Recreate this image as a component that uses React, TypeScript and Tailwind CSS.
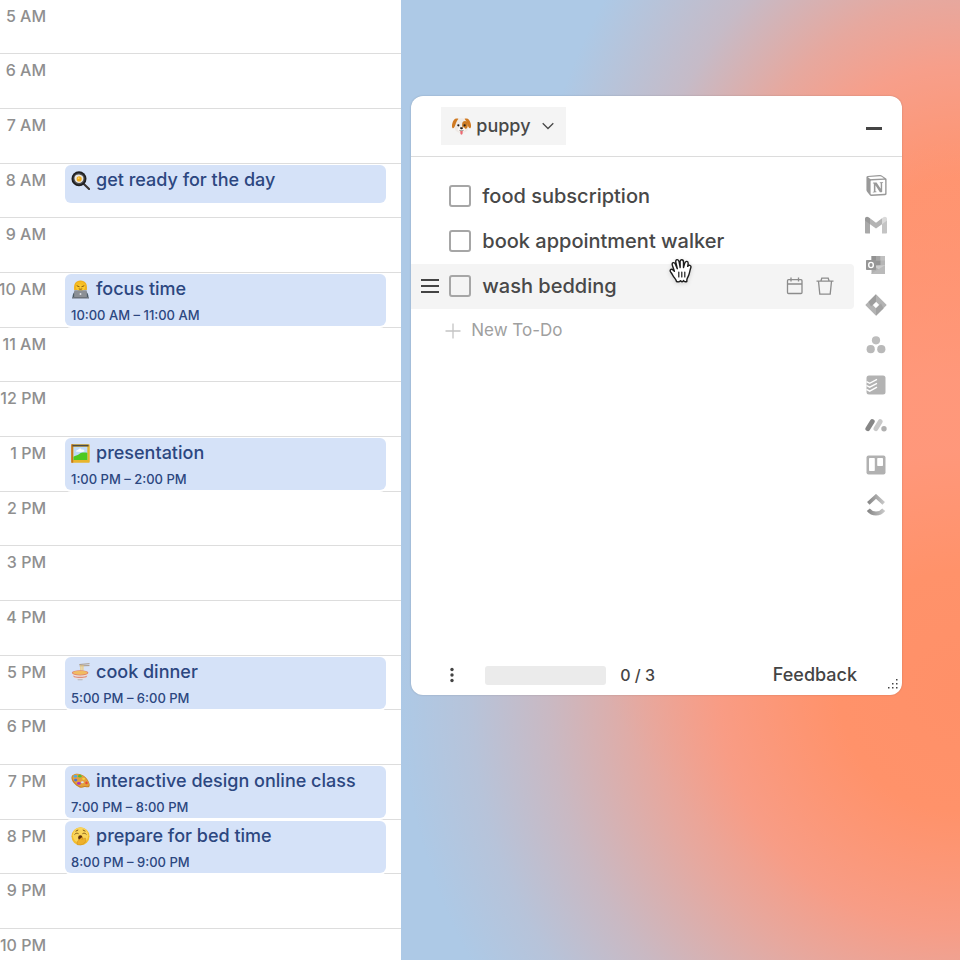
import React from 'react';
import { SiNotion } from 'react-icons/si';

interface CalendarEvent {
  title: string;
  time?: string;
  icon: React.ReactNode;
}

interface HourSlot {
  label: string;
  event?: CalendarEvent;
}

interface Todo {
  id: string;
  title: string;
  active?: boolean;
}

const EMOJI = 'h-[19px] w-[19px] shrink-0';

const FryingPan = () => (
  <svg viewBox="0 0 20 20" className={EMOJI} aria-hidden="true">
    <path d="M13 13.2 19 19" stroke="#3a3432" strokeWidth="2.2" strokeLinecap="round" />
    <circle cx="8.4" cy="8.2" r="7.9" fill="#1f1f21" />
    <circle cx="8.4" cy="8.2" r="6" fill="#4b4c50" />
    <path d="M3.800 6.400c.6-2.200 2.800-2.900 4.800-2.600 2.400.2 4.700 1.900 4.500 4.400-.1 2.400-2.200 4.500-4.700 4.500-2.600.1-5.400-3-4.600-6.300Z" fill="#e9e6e2" />
    <circle cx="8.600" cy="8.300" r="2.700" fill="#f0ac1c" />
    <circle cx="8" cy="7.500" r=".9" fill="#fbd766" />
  </svg>
);

const Technologist = () => (
  <svg viewBox="0 0 20 20" className={EMOJI} aria-hidden="true">
    <path d="M3.300 10.500C2.600 4.200 4.800.7 10 .6c5.200.1 7.400 3.600 6.700 9.900Z" fill="#efb11f" />
    <circle cx="10" cy="7" r="4.900" fill="#fcc92e" />
    <path d="M4.800 6C5.200 3 7.600 2 10 2.100c3 0 4.900 1.300 5.200 3.900-2.700-.1-4.500-.7-5.600-1.900C8.700 5.300 6.900 6 4.800 6Z" fill="#f7bd22" />
    <path d="M6.400 6.200 8.600 7M11.400 7l2.200-.8M8.600 9.400c.9.500 1.900.5 2.800 0" stroke="#70450d" strokeWidth=".9" fill="none" strokeLinecap="round" />
    <path d="M1.500 18.500c.2-3.700 1.300-5.700 3-6.500h11c1.700.8 2.800 2.800 3 6.500Z" fill="#4b5a66" />
    <rect x="3.300" y="10.800" width="13.400" height="8" rx=".8" fill="#8b8f95" />
    <path d="M1 18.300h18v1.100H1Z" fill="#585c62" />
    <circle cx="10" cy="14.700" r="1" fill="#e1e3e6" />
  </svg>
);

const FramedPicture = () => (
  <svg viewBox="0 0 20 20" className={EMOJI} aria-hidden="true">
    <rect x=".3" y=".3" width="19.400" height="19.400" rx=".8" fill="#e8b52c" />
    <path d="M.3.300h2v19.400h-2Z" fill="#c4771f" />
    <path d="M1.500.8h17v1.800h-17Z" fill="#4b4a45" />
    <rect x="2.600" y="3" width="14.600" height="13.800" fill="#bdd9f7" />
    <path d="M5 8c1-2 2.400-1.500 3-2.500 1.300-1.200 3-.5 3.300.5 1.500-.3 2.700.2 2.900 1.500-2.600 1.300-6 1-9.200.5Z" fill="#f7fafd" />
    <path d="M2.600 13.500c2-1.700 4-1.200 5.800-2.700 2.600-2 5.400-1.900 8.800-1.500v7.500H2.600Z" fill="#4ec91f" />
  </svg>
);

const NoodleBowl = () => (
  <svg viewBox="0 0 20 20" className={EMOJI} aria-hidden="true">
    <path d="M8.800 1.600 19.500.7M9 3l10.400-.3" stroke="#9b8266" strokeWidth=".8" />
    <path d="M10.200 2.300v6M11.600 2.300v6M12.700 2.300V8" stroke="#f4c765" strokeWidth=".8" />
    <path d="M1 10.400c.2 4 3.200 6.300 6 7h5.200c2.800-.7 5.800-3 6-7Z" fill="#e9e1df" />
    <path d="M2.200 13.200c2 1.700 12.800 1.700 14.900 0-.2.700-.6 1.300-1 1.800-3 1-9.900 1-12.800 0-.5-.5-.9-1.100-1.100-1.800Z" fill="#e08d7c" />
    <ellipse cx="9.600" cy="10.300" rx="8.700" ry="2.800" fill="#e0806c" />
    <ellipse cx="9.600" cy="10.200" rx="7.600" ry="2.100" fill="#f0bc62" />
    <path d="M6.800 17h5.600l-.4 1.200H7.200Z" fill="#b8b2b4" />
  </svg>
);

const Palette = () => (
  <svg viewBox="0 0 20 20" className={EMOJI} aria-hidden="true">
    <path d="M1.500 3.500C4.800.6 11.500 1.600 15.300 5.500c3.700 3.600 5.300 8.300 3.900 10-1.200 1.400-3.500-.2-5.100.4-1.600.5-2.900 1.300-5.200.3C3.600 14.200-1.900 7 1.500 3.500Z" fill="#c98225" />
    <path d="M2.400 3.300c3.200-2.300 8.900-1 12.400 2.600 3.200 3.200 4.700 7 3.800 8.500-1.100 1.300-3.100-.2-4.700.4-1.700.5-2.900 1.100-4.900.2C4.200 13-.4 6.300 2.400 3.300Z" fill="#e3a13e" />
    <ellipse cx="4.600" cy="4.600" rx="1.900" ry="1.500" fill="#49a9e8" />
    <ellipse cx="9.300" cy="4.400" rx="1.900" ry="1.400" fill="#56be35" />
    <ellipse cx="4.900" cy="8.500" rx="1.700" ry="1.400" fill="#4f72d8" />
    <ellipse cx="8.300" cy="12" rx="2" ry="1.500" fill="#a632c9" />
    <ellipse cx="13.300" cy="7.200" rx="1.600" ry="1.200" fill="#f4d43c" />
    <ellipse cx="16.300" cy="11.500" rx="1.300" ry="1.500" fill="#e8453c" />
    <ellipse cx="12" cy="10.800" rx="1.500" ry="1.100" fill="#d7e3f7" />
  </svg>
);

const YawningFace = () => (
  <svg viewBox="0 0 20 20" className={EMOJI} aria-hidden="true">
    <circle cx="10" cy="9.800" r="9.500" fill="#f3bd2e" />
    <circle cx="10" cy="8.800" r="8.200" fill="#fad55a" />
    <path d="M4 7.600c1.100-1.200 2.300-1.400 3.600-.7M12.400 6.900c1.300-.7 2.500-.5 3.600.7M5.200 4.300l2-1M14.800 4.300l-2-1" stroke="#6b430d" strokeWidth=".9" fill="none" strokeLinecap="round" />
    <ellipse cx="9.800" cy="11.300" rx="2.300" ry="2.500" fill="#5d2e0b" />
    <path d="M7 18.800c-1.100-2.600-.4-4.200 1.300-5.400l3.300-2.500c.8-.5 1.400.3.800 1l-1 1.200 3-1.300c1-.4 1.400.6.700 1.100.8.100.9.900.2 1.300.6.300.5 1-.1 1.300-.9 2.200-3.900 3.900-8.200 3.300Z" fill="#eeb02a" stroke="#b97a14" strokeWidth=".4" />
  </svg>
);

const DogFace = () => (
  <svg viewBox="0 0 20 20" className={EMOJI} aria-hidden="true">
    <path d="M3.600 5C5 2 7.300 1.200 10 1.200S15 2 16.400 5c1.300 2.900 1.300 6.500.2 8.700-1.300 2-3.700 3.100-6.600 3.100s-5.300-1.100-6.600-3.100C2.300 11.500 2.300 7.900 3.600 5Z" fill="#efeae6" />
    <ellipse cx="13.600" cy="8.300" rx="3" ry="4.100" fill="#cd7c24" />
    <path d="M6.800 1.900C3.200.6 1.200 3 .4 6.700-.4 9.600-.1 12 1.300 11.800c2.200-.5 2.100-5.900 5.500-9.900Z" fill="#d07a22" />
    <path d="M13.200 1.900c3.600-1.300 5.600 1.100 6.400 4.800.8 2.900.5 5.300-.9 5.100-2.200-.5-2.100-5.900-5.500-9.900Z" fill="#d07a22" />
    <circle cx="6.700" cy="8.700" r="1.200" fill="#231c19" />
    <circle cx="13.300" cy="8.700" r="1.200" fill="#231c19" />
    <ellipse cx="10" cy="13" rx="3.800" ry="2.600" fill="#fbf8f6" />
    <path d="M8.500 11.200c.7-.5 2.300-.5 3 0 .2 1-.7 1.600-1.500 1.600s-1.700-.6-1.500-1.600Z" fill="#231c19" />
    <path d="M7.900 14.100c1.200.6 3 .6 4.200 0" stroke="#4a3b34" strokeWidth=".7" fill="none" />
    <path d="M8.800 14.700h2.400v2.500c0 1.900-2.400 1.900-2.400 0Z" fill="#ec6a72" />
  </svg>
);

const HOURS: HourSlot[] = [
  { label: '5 AM' },
  { label: '6 AM' },
  { label: '7 AM' },
  { label: '8 AM', event: { title: 'get ready for the day', icon: <FryingPan /> } },
  { label: '9 AM' },
  { label: '10 AM', event: { title: 'focus time', time: '10:00 AM – 11:00 AM', icon: <Technologist /> } },
  { label: '11 AM' },
  { label: '12 PM' },
  { label: '1 PM', event: { title: 'presentation', time: '1:00 PM – 2:00 PM', icon: <FramedPicture /> } },
  { label: '2 PM' },
  { label: '3 PM' },
  { label: '4 PM' },
  { label: '5 PM', event: { title: 'cook dinner', time: '5:00 PM – 6:00 PM', icon: <NoodleBowl /> } },
  { label: '6 PM' },
  { label: '7 PM', event: { title: 'interactive design online class', time: '7:00 PM – 8:00 PM', icon: <Palette /> } },
  { label: '8 PM', event: { title: 'prepare for bed time', time: '8:00 PM – 9:00 PM', icon: <YawningFace /> } },
  { label: '9 PM' },
  { label: '10 PM' }
];

const TODOS: Todo[] = [
  { id: 'food', title: 'food subscription' },
  { id: 'walker', title: 'book appointment walker' },
  { id: 'bedding', title: 'wash bedding', active: true }
];

const LOGO = 'h-[22px] w-[22px]';

const INTEGRATIONS: { name: string; icon: React.ReactNode }[] = [
  { name: 'Notion', icon: <SiNotion className="h-[21px] w-[21px] text-[#999999]" /> },
  {
    name: 'Gmail',
    icon: (
      <svg viewBox="0 0 22 22" className={LOGO} aria-hidden="true">
        <path d="M0 5v13.500c0 .6.400 1 1 1h4V9.300Z" fill="#a9a9a9" />
        <path d="M22 5v13.500c0 .6-.4 1-1 1h-4V9.300Z" fill="#c4c4c4" />
        <path d="M5 4.200v6l6 4.400 6-4.400v-6l-6 4.500Z" fill="#b4b4b4" />
        <path d="M0 4.800C0 2.900 2 2 3.600 3.200L5 4.200v6L0 6.500Z" fill="#989898" />
        <path d="M22 4.800c0-1.900-2-2.800-3.600-1.600L17 4.200v6l5-3.700Z" fill="#dadada" />
      </svg>
    )
  },
  {
    name: 'Outlook',
    icon: (
      <svg viewBox="0 0 22 22" className={LOGO} aria-hidden="true">
        <path d="M6.500 2h13.500v9H6.500Z" fill="#b5b5b5" />
        <path d="M6.500 2H11v4.500H6.500Z" fill="#929292" />
        <path d="M11 2h4.500v4.500H11Z" fill="#a5a5a5" />
        <path d="M15.500 2H20v4.500h-4.500Z" fill="#c0c0c0" />
        <path d="M11 6.500h4.500V11H11Z" fill="#949494" />
        <path d="M6.500 11h13.500v9H6.500Z" fill="#b0b0b0" />
        <path d="M20 11v9L9 12Z" fill="#cccccc" />
        <path d="M6.500 19.500 20 11.200V20H6.500Z" fill="#bababa" />
        <rect x="1" y="6" width="10" height="10" rx=".8" fill="#969696" />
        <ellipse cx="6" cy="11" rx="2.300" ry="2.600" fill="none" stroke="#ffffff" strokeWidth="1.400" />
      </svg>
    )
  },
  {
    name: 'Jira',
    icon: (
      <svg viewBox="0 0 22 22" className={LOGO} aria-hidden="true">
        <path d="M11 .3 21.300 10.500a.7.7 0 0 1 0 1L11 21.700.7 11.500a.7.7 0 0 1 0-1Zm0 7.500L7.800 11l3.200 3.200 3.200-3.200Z" fill="#b3b3b3" fillRule="evenodd" />
        <path d="M11 .3v7.500L6 12.600 3.500 7.700Z" fill="#9d9d9d" />
        <path d="M11 21.700v-7.500l5-4.800 2.500 5Z" fill="#a2a2a2" />
      </svg>
    )
  },
  {
    name: 'Asana',
    icon: (
      <svg viewBox="0 0 22 22" className={LOGO} aria-hidden="true">
        <circle cx="11" cy="6.300" r="4.100" fill="#bdbdbd" />
        <circle cx="5.700" cy="15.200" r="4.100" fill="#b9b9b9" />
        <circle cx="16.300" cy="15.200" r="4.100" fill="#b9b9b9" />
      </svg>
    )
  },
  {
    name: 'Todoist',
    icon: (
      <svg viewBox="0 0 22 22" className={LOGO} aria-hidden="true">
        <rect x="1.500" y="1.500" width="19" height="19" rx="2.500" fill="#b3b3b3" />
        <path d="m1.500 7.600 3.200 1.700 7.300-3.900M1.500 11.500l3.200 1.700L12 9.300M1.500 15.400l3.200 1.700 7.300-3.900" stroke="#ffffff" strokeWidth="1.400" fill="none" />
      </svg>
    )
  },
  {
    name: 'monday.com',
    icon: (
      <svg viewBox="0 0 22 22" className={LOGO} aria-hidden="true">
        <path d="M2.800 14.800 7.300 7.500" stroke="#868686" strokeWidth="4.800" strokeLinecap="round" />
        <path d="m10.800 14.800 4.500-7.300" stroke="#c9c9c9" strokeWidth="4.800" strokeLinecap="round" />
        <circle cx="19" cy="14.700" r="2.700" fill="#b0b0b0" />
      </svg>
    )
  },
  {
    name: 'Trello',
    icon: (
      <svg viewBox="0 0 22 22" className={LOGO} aria-hidden="true">
        <rect x="1.500" y="1.500" width="19" height="19" rx="2" fill="#b1b1b1" />
        <rect x="4" y="4" width="5.800" height="13" rx=".8" fill="#ffffff" />
        <rect x="12.200" y="4" width="5.800" height="8" rx=".8" fill="#ffffff" />
      </svg>
    )
  },
  {
    name: 'ClickUp',
    icon: (
      <svg viewBox="0 0 22 22" className={LOGO} aria-hidden="true">
        <defs>
          <linearGradient id="clickup" x1="0" x2="1">
            <stop stopColor="#878787" />
            <stop offset="1" stopColor="#c6c6c6" />
          </linearGradient>
        </defs>
        <path d="M3.300 9.300 11 2.400l7.700 6.900" stroke="url(#clickup)" strokeWidth="3.700" fill="none" />
        <path d="M3.300 15.700c4.200 5.100 11.200 5.100 15.400 0" stroke="url(#clickup)" strokeWidth="3.900" fill="none" />
      </svg>
    )
  }
];

const HourRow: React.FC<HourSlot> = ({ label, event }) => (
  <li className="flex border-b border-[#dddddd]">
    <span className="flex w-[46px] shrink-0 justify-end whitespace-nowrap text-base leading-8 font-medium text-[#8f8f8f]">
      {label}
    </span>
    {event && (
      <div
        className={`mt-px mr-[15px] ml-[19px] min-w-0 flex-1 rounded-md bg-[#d5e2f8] px-1.5 pt-px font-medium text-[#2c4780] shadow-[0_1px_0_1px_#ffffff] ${
          event.time ? 'h-[52px]' : 'h-[38px]'
        }`}
      >
        <div className="flex items-center gap-[6px] text-lg leading-7 whitespace-nowrap">
          {event.icon}
          <span>{event.title}</span>
        </div>
        {event.time && <div className="text-[13px] leading-6">{event.time}</div>}
      </div>
    )}
  </li>
);

const TodoRow: React.FC<Todo> = ({ id, title, active }) => (
  <li className={`flex h-[45px] items-center pr-5 pb-0.5 pl-2.5 ${active ? 'rounded-r-sm bg-[#f4f4f4]' : ''}`}>
    <span className="w-7 shrink-0">
      {active && (
        <button type="button" aria-label="Reorder" className="block">
          <svg viewBox="0 0 18 14" className="h-[14px] w-[18px]" aria-hidden="true">
            <path d="M0 1h18M0 7h18M0 13h18" stroke="#444444" strokeWidth="2" />
          </svg>
        </button>
      )}
    </span>
    <input
      id={id}
      type="checkbox"
      className="h-[22px] w-[22px] shrink-0 appearance-none rounded-[3px] border-2 border-[#a6a6a6] bg-transparent"
    />
    <label htmlFor={id} className="ml-[11px] flex-1 text-xl font-medium whitespace-nowrap text-[#484848]">
      {title}
    </label>
    {active && (
      <div className="flex gap-3">
        <button type="button" aria-label="Schedule">
          <svg viewBox="0 0 18 18" className="h-[18px] w-[18px]" fill="none" stroke="#8c8c8c" strokeWidth="1.300" aria-hidden="true">
            <rect x="1.500" y="2.700" width="14.500" height="13.800" rx="1" />
            <path d="M1.500 7h14.500M5 .5v4M12.500.5v4" />
          </svg>
        </button>
        <button type="button" aria-label="Delete">
          <svg viewBox="0 0 18 18" className="h-[18px] w-[18px]" fill="none" stroke="#8c8c8c" strokeWidth="1.300" aria-hidden="true">
            <path d="M.5 4.200h17M4.800 4.200l1-3h6.400l1 3M2.500 4.200l1.300 12.900h10.400l1.300-12.900" />
          </svg>
        </button>
      </div>
    )}
  </li>
);

const HandCursor = () => (
  <svg viewBox="0 0 24 26" className="absolute top-[162px] left-[258px] h-[26px] w-[24px] drop-shadow-sm" aria-hidden="true">
    <path
      d="M7.500 23.500c-.5-2-2-3.400-3-5-.9-1.500-1.500-2.800-2.700-4.300-.9-1.200-.8-2.300.1-2.800 1.100-.5 2.300.4 3.500 1.900L3.600 8c-.7-1.800-.5-2.900.5-3.300 1-.4 1.900.4 2.500 2l1.700 4-1.400-6.100c-.4-1.600 0-2.600 1-2.900 1.100-.2 1.900.6 2.200 2.200l1.100 5.600-.1-5.300c0-1.600.6-2.500 1.700-2.500s1.700.9 1.700 2.500v5.400l1.200-4.200c.4-1.500 1.200-2.200 2.200-2 1 .2 1.400 1.200 1.200 2.600l-.4 2.400c.7-1 1.700-1.400 2.500-.9.900.5.900 1.500.5 2.600-.8 2.300-1.100 4.600-1.900 6.900-.6 1.800-1.700 3.100-1.900 4.600l-.1 1.900c-1.300.5-2.600.4-3.200-1-.7 1.500-2.400 1.700-3 .1-.5 1.300-2.500 1.600-4.100.9Z"
      fill="#ffffff"
      stroke="#1c1c1c"
      strokeWidth="1.400"
      strokeLinejoin="round"
    />
    <path d="M9.800 14v5M12.800 14v5M15.800 14v5" stroke="#1c1c1c" strokeWidth="1.200" strokeLinecap="round" />
  </svg>
);

const TodoPanel = () => (
  <section className="relative rounded-xl bg-white shadow-[0_0_2px_rgba(0,0,0,0.2)]">
    <header className="flex h-[61px] items-center justify-between border-b border-[#dcdcdc] pr-5 pl-[30px]">
      <div className="relative flex h-[38px] items-center gap-[5px] bg-[#f4f4f4] pl-[11px]">
        <DogFace />
        <select
          aria-label="List"
          className="h-full w-[90px] appearance-none bg-transparent text-lg font-medium text-[#484848] outline-none"
        >
          <option>puppy</option>
        </select>
        <svg viewBox="0 0 12 8" className="pointer-events-none absolute right-3 h-2 w-3" aria-hidden="true">
          <path d="m.7 1.200 5.300 5.300 5.300-5.300" stroke="#484848" strokeWidth="1.300" fill="none" />
        </svg>
      </div>
      <button type="button" aria-label="Minimize" className="flex h-6 w-4 items-center">
        <span className="mt-1 h-[3px] w-full bg-[#444444]" />
      </button>
    </header>

    <div className="flex">
      <div className="min-h-[498px] flex-1 pt-[17px]">
        <ul>
          {TODOS.map((todo) => (
            <TodoRow key={todo.id} {...todo} />
          ))}
        </ul>
        <div className="flex h-11 items-center gap-2.5 pl-[34px]">
          <svg viewBox="0 0 16 16" className="h-4 w-4" aria-hidden="true">
            <path d="M8 .5v15M.5 8h15" stroke="#c4c4c4" strokeWidth="1.300" />
          </svg>
          <input
            type="text"
            aria-label="New To-Do"
            placeholder="New To-Do"
            className="min-w-0 flex-1 bg-transparent text-[17px] outline-none placeholder:text-[#a0a0a0]"
          />
        </div>
      </div>

      {/* Integrations */}
      <nav className="flex w-12 flex-col pt-2">
        {INTEGRATIONS.map(({ name, icon }) => (
          <button key={name} type="button" aria-label={name} className="-ml-1 flex h-10 items-center justify-center">
            {icon}
          </button>
        ))}
      </nav>
    </div>

    <footer className="flex h-10 items-center pr-1 pl-[38px] font-medium text-[#444444]">
      <button type="button" aria-label="More">
        <svg viewBox="0 0 6 16" className="h-4 w-1.5" fill="#444444" aria-hidden="true">
          <circle cx="3" cy="2.500" r="1.700" />
          <circle cx="3" cy="8" r="1.700" />
          <circle cx="3" cy="13.500" r="1.700" />
        </svg>
      </button>
      <div className="ml-[30px] h-[19px] w-[121px] rounded-[3px] bg-[#ebebeb]" />
      <span className="ml-3.5 text-base">0 / 3</span>
      <button type="button" className="mr-[31px] ml-auto text-lg">
        Feedback
      </button>
      <svg viewBox="0 0 10 10" className="mb-1.5 h-2.5 w-2.5 self-end" fill="#444444" aria-hidden="true">
        <path d="M8 0h1.500v1.500H8ZM4 4h1.500v1.500H4ZM8 4h1.500v1.500H8ZM0 8h1.500v1.500H0ZM4 8h1.500v1.500H4ZM8 8h1.500v1.500H8Z" />
      </svg>
    </footer>

    <HandCursor />
  </section>
);

const App = () => (
  <div className="flex h-screen overflow-hidden bg-white font-['Inter','Liberation_Sans',sans-serif]">
    <ol className="grid w-[41.8%] shrink-0 grid-rows-[repeat(6,54px_55px_55px)] content-start">
      {HOURS.map((slot) => (
        <HourRow key={slot.label} {...slot} />
      ))}
    </ol>
    <main className="min-w-0 flex-1 bg-[#adc9e6] bg-[radial-gradient(circle_at_100%_72%,#ff9068_0px,#ff926a_120px,#ff987ce6_240px,#ff9a80b3_310px,#ff9a8059_410px,#ff9a801f_490px,#ff9a8000_560px),radial-gradient(420px_560px_at_100%_36%,#ff926c_0%,#ff946f_30%,#ff9a80e6_50%,#ff9a80b3_62%,#ff9a804d_80%,#ff9a8000_105%)] pt-24 pr-[58px] pl-2.5">
      <TodoPanel />
    </main>
  </div>
);

export default App;
